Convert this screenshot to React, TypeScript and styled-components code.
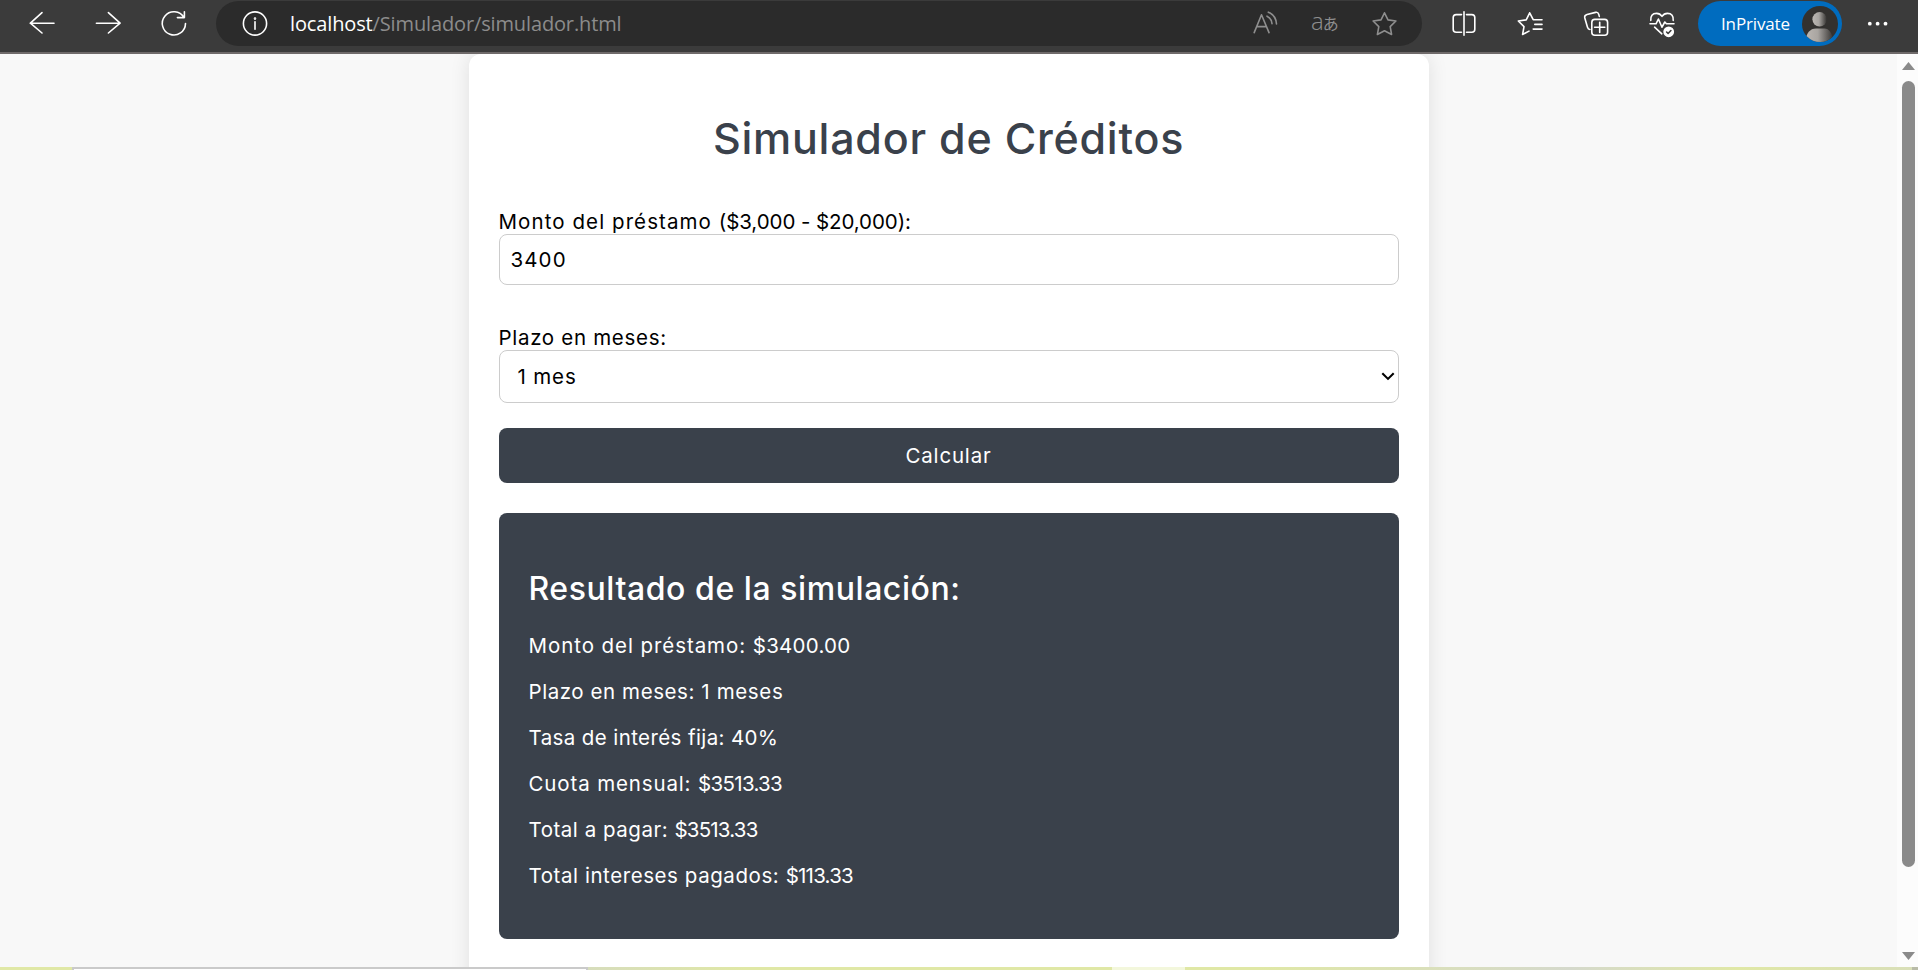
import React, { useState } from 'react'
import styled, { createGlobalStyle } from 'styled-components'

const resultados = [
  { label: 'Monto del préstamo: ', labelSpacing: 0.93, value: '$3400.00', valueSpacing: 0.26 },
  { label: 'Plazo en meses: ', labelSpacing: 0.57, value: '1 meses', valueSpacing: 0.64 },
  { label: 'Tasa de interés fija: ', labelSpacing: 0.4, value: '40%', valueSpacing: 0.3 },
  { label: 'Cuota mensual: ', labelSpacing: 0.86, value: '$3513.33', valueSpacing: -0.68 },
  { label: 'Total a pagar: ', labelSpacing: 0.53, value: '$3513.33', valueSpacing: -0.8 },
  { label: 'Total intereses pagados: ', labelSpacing: 0.57, value: '$113.33', valueSpacing: -0.77 },
]

const BrowserBar: React.FC = () => (
  <StyledToolbar>
    <StyledNav>
      <StyledIcon viewBox="0 0 27 27">
        <path d="M2.2 13.2H26M14 2.6 2.4 13.2 14 23" />
      </StyledIcon>
      <StyledIcon viewBox="0 0 27 27">
        <path d="M2.400 13.2h23.6M14.400 2.6l11.7 10.6L14.400 23" />
      </StyledIcon>
      <StyledIcon viewBox="0 0 27 27">
        <path d="M25.5 13.5a11.6 11.6 0 1 1-1.6-6M24.4 1.8v5.8h-7" />
      </StyledIcon>
    </StyledNav>
    <StyledAddress>
      <StyledIcon viewBox="0 0 27 27">
        <circle cx="14" cy="13.5" r="11.6" />
        <path d="M14 11.8v7.4" />
        <circle cx="14" cy="8.6" r="0.5" />
      </StyledIcon>
      <StyledUrl>
        <b>localhost</b>/Simulador/simulador.html
      </StyledUrl>
      <StyledAddressTools>
        <StyledIcon viewBox="0 0 27 27" $muted>
          <path d="M2.2 22.6 9.5 4.8 17 22.6M4.8 16.6h9.5M16.3 2.2Q24 5.4 24.5 14M15 6.2q4.6 2.2 5 7.4" />
        </StyledIcon>
        <StyledTranslate>
          a<span>あ</span>
        </StyledTranslate>
        <StyledIcon viewBox="0 0 27 27" $muted>
          <path d="M13.5 2.8 17 9.9l7.9 1.1-5.7 5.6 1.4 7.9-7.1-3.8-7.1 3.8 1.4-7.9L2.1 11 10 9.9z" />
        </StyledIcon>
      </StyledAddressTools>
    </StyledAddress>
    <StyledActions>
      <StyledIcon viewBox="0 0 27 27">
        <path d="M11.5 4.6H6.2q-3 0-3 3v11.6q0 3 3 3h5.3M16.5 4.6h5.3q3 0 3 3v11.6q0 3-3 3h-5.3M14 1.8v23.4" />
      </StyledIcon>
      <StyledIcon viewBox="0 0 27 27">
        <path d="M26 9.7h-8.8L13.7 2.8 10.2 9.9 2.3 11l5.7 5.6-1.4 7.9 6.4-3.4M18.8 14.4H26M17.2 19.1H26" />
      </StyledIcon>
      <StyledIcon viewBox="0 0 27 27">
        <path d="M17.3 6.4l-.6-2.1q-.7-2.4-3.1-1.9L5 4.5Q2.1 5.3 2.8 8l2.7 9.3q.6 2 2.4 2.2" />
        <rect x="9.8" y="9.4" width="15.8" height="15.8" rx="3" />
        <path d="M17.7 12.2v10.2M12.6 17.3h10.2" />
      </StyledIcon>
      <StyledIcon viewBox="0 0 27 27">
        <path d="M2.8 10.4Q2.2 3.4 8.6 3.4q3.4 0 5.4 3 2-3 5.4-3 6.4 0 5.8 7M2 13.8h6L10.4 9 14 17.2l2.8-5.2 1.6 1.8H26M6.6 17.2l7.2 6.6" />
        <circle cx="20.7" cy="21.8" r="4.6" fill="#fff" />
        <path d="M18.6 22l1.5 1.5 2.8-3" stroke="#3b3b3b" />
      </StyledIcon>
    </StyledActions>
    <StyledProfile>
      InPrivate
      <svg width="36" height="36" viewBox="0 0 36 36">
        <defs>
          <linearGradient id="skin">
            <stop offset="0" stopColor="#bdb8b3" />
            <stop offset="0.45" stopColor="#a9a5a1" />
            <stop offset="1" stopColor="#33312f" />
          </linearGradient>
          <clipPath id="round">
            <circle cx="18" cy="18" r="18" />
          </clipPath>
        </defs>
        <g clipPath="url(#round)">
          <rect width="36" height="36" fill="#33312f" />
          <circle cx="17.6" cy="13.3" r="7.2" fill="url(#skin)" />
          <path d="M3 36q2-13.4 11-13.4h8.5q7 0 9 13.4z" fill="url(#skin)" />
        </g>
      </svg>
    </StyledProfile>
    <StyledIcon viewBox="0 0 27 27">
      <g fill="#fff" stroke="none">
        <circle cx="5.8" cy="13.7" r="1.9" />
        <circle cx="13.6" cy="13.7" r="1.9" />
        <circle cx="21.5" cy="13.7" r="1.9" />
      </g>
    </StyledIcon>
  </StyledToolbar>
)

const App: React.FC = () => {
  const [monto, setMonto] = useState('3400')

  return (
    <StyledWindow>
      <GlobalStyle />
      <BrowserBar />
      <StyledViewport>
        <StyledPage>
          <StyledCard>
            <StyledTitle>Simulador de Créditos</StyledTitle>
            <StyledLabel htmlFor="monto">
              <StyledText $spacing={1.08}>Monto del préstamo </StyledText>
              <StyledText $spacing={-0.08}>($3,000 - $20,000):</StyledText>
            </StyledLabel>
            <StyledInput id="monto" value={monto} onChange={e => setMonto(e.target.value)} />
            <StyledLabel>
              <StyledText $spacing={0.69}>Plazo en meses:</StyledText>
            </StyledLabel>
            <StyledSelect>
              1 mes
              <svg width="14" height="9" viewBox="0 0 14 9">
                <path d="M1.3 1.3 7 6.9l5.7-5.6" fill="none" stroke="#000" strokeWidth="2.1" />
              </svg>
            </StyledSelect>
            <StyledButton>Calcular</StyledButton>
            <StyledResult>
              <h2>Resultado de la simulación:</h2>
              {resultados.map(item => (
                <p key={item.label}>
                  <StyledText $spacing={item.labelSpacing}>{item.label}</StyledText>
                  <StyledText $spacing={item.valueSpacing}>{item.value}</StyledText>
                </p>
              ))}
            </StyledResult>
          </StyledCard>
        </StyledPage>
        <StyledScrollbar>
          <svg width="13" height="8" viewBox="0 0 13 8"><path d="M0 8 6.5 0 13 8z" fill="#8a8a8a" /></svg>
          <StyledThumb />
          <svg width="13" height="8" viewBox="0 0 13 8"><path d="M0 0h13L6.5 8z" fill="#8a8a8a" /></svg>
        </StyledScrollbar>
      </StyledViewport>
      <StyledDesktopEdge>
        <i /><i /><i /><i /><i /><i />
      </StyledDesktopEdge>
    </StyledWindow>
  )
}

const GlobalStyle = createGlobalStyle`
  body {
    margin: 0;
    overflow: hidden;
    font-family: Inter, sans-serif;
  }
  * {
    box-sizing: border-box;
  }
`

const StyledWindow = styled.div`
  width: 100%;
  height: 970px;
  display: grid;
  grid-template-rows: 54px 913px 3px;
  overflow: hidden;
`
const StyledToolbar = styled.header`
  display: flex;
  align-items: center;
  padding: 1px 26px 6px 28px;
  background: #3b3b3b;
  border-bottom: 2px solid #6f6a6a;
  font-family: 'Open Sans', sans-serif;
`
const StyledIcon = styled.svg<{ $muted?: boolean }>`
  width: 27px;
  height: 27px;
  flex: none;
  overflow: visible;
  fill: none;
  stroke: ${({ $muted }) => ($muted ? '#8e8e8e' : '#fff')};
  stroke-width: 1.6;
  stroke-linecap: round;
  stroke-linejoin: round;
`
const StyledNav = styled.nav`
  display: flex;
  gap: 39px;
  margin-right: 29px;
`
const StyledAddress = styled.div`
  width: 1206px;
  height: 45px;
  display: flex;
  align-items: center;
  padding: 0 24px 0 25px;
  border-radius: 23px;
  background: #2b2b2b;
`
const StyledUrl = styled.div`
  flex: 1;
  margin-left: 22px;
  font-size: 20px;
  line-height: 45px;
  letter-spacing: -0.135px;
  color: #8c8c8c;
  b {
    font-weight: 400;
    color: #fff;
  }
`
const StyledAddressTools = styled.div`
  display: flex;
  align-items: center;
  gap: 32px;
`
const StyledTranslate = styled.div`
  width: 28px;
  height: 45px;
  font-size: 24px;
  font-weight: 300;
  line-height: 40px;
  color: #8e8e8e;
  white-space: nowrap;
  span {
    margin-left: -1px;
    font-family: 'Noto Sans CJK JP', sans-serif;
    font-size: 16px;
    font-weight: 400;
    line-height: 1;
  }
`
const StyledActions = styled.div`
  display: flex;
  gap: 39px;
  margin-left: 28px;
`
const StyledProfile = styled.div`
  width: 144px;
  height: 45px;
  display: flex;
  align-items: center;
  justify-content: space-between;
  margin: 0 22px 0 23px;
  padding: 0 4px 0 23px;
  border-radius: 23px;
  background: #006cbf;
  color: #fff;
  font-size: 17px;
  letter-spacing: -0.14px;
`
const StyledViewport = styled.div`
  display: grid;
  grid-template-columns: 1fr 21px;
  overflow: hidden;
`
const StyledPage = styled.main`
  display: flex;
  justify-content: center;
  align-items: flex-start;
  overflow: hidden;
  background: #f8f8f8;
`
const StyledCard = styled.form`
  width: 960px;
  height: 960px;
  display: flex;
  flex-direction: column;
  flex: none;
  padding: 57px 30px 0;
  border-radius: 12px;
  background: #fff;
  box-shadow: 0 0 20px rgba(0, 0, 0, 0.1);
  font-size: 20.5px;
`
const StyledTitle = styled.h1`
  margin: 0 0 44px;
  font-size: 43px;
  font-weight: 500;
  line-height: 54px;
  letter-spacing: 0.76px;
  text-align: center;
  color: #3a414b;
`
const StyledText = styled.span<{ $spacing: number }>`
  letter-spacing: ${({ $spacing }) => $spacing}px;
`
const StyledLabel = styled.label`
  line-height: 25px;
`
const StyledInput = styled.input`
  height: 51px;
  margin: 0 0 40px;
  padding: 0 11px;
  border: 1px solid #ccc;
  border-radius: 8px;
  outline: none;
  background: #fff;
  font: inherit;
  letter-spacing: 1.1px;
  color: #000;
`
const StyledSelect = styled.div`
  height: 53px;
  display: flex;
  align-items: center;
  justify-content: space-between;
  margin-bottom: 25px;
  padding: 0 3px 0 18px;
  border: 1px solid #ccc;
  border-radius: 8px;
  letter-spacing: 0.85px;
`
const StyledButton = styled.button`
  height: 55px;
  flex: none;
  margin: 0 0 30px;
  padding: 0;
  border: none;
  border-radius: 8px;
  background: #3a414b;
  color: #fff;
  font: inherit;
  letter-spacing: 0.83px;
`
const StyledResult = styled.section`
  height: 426px;
  padding: 56px 30px 0;
  border-radius: 8px;
  background: #3a414b;
  color: #fff;
  h2 {
    margin: 0 0 24px;
    font-size: 32px;
    font-weight: 500;
    line-height: 40px;
    letter-spacing: 0.56px;
  }
  p {
    margin: 0 0 20px;
    line-height: 26px;
  }
`
const StyledScrollbar = styled.div`
  display: flex;
  flex-direction: column;
  align-items: center;
  padding: 8px 3px 7px 5px;
  background: #fcfcfc;
`
const StyledThumb = styled.div`
  width: 13px;
  height: 786px;
  margin: 11px 0 auto;
  border-radius: 7px;
  background: #8a8a8a;
`
// sliver of the desktop and of another window under the browser
const StyledDesktopEdge = styled.div`
  display: grid;
  grid-template-columns: 72px 516px 524px 73px 727px 1fr;
  background: #e0e8a6;
  i:nth-child(2) {
    border: 2px solid #cacaca;
    border-bottom: none;
    background: #fff;
  }
  i:nth-child(3) {
    background: linear-gradient(90deg, #d7ddbc, #e0e8a6 30%);
  }
  i:nth-child(4) {
    background: #f3f7dc;
  }
  i:nth-child(5) {
    background: linear-gradient(90deg, #e0e8a6 10%, #d5d9cc 53%, #e0e8a6 76%, #d9dfb8);
  }
  i:nth-child(6) {
    background: #b9bba8;
  }
`

export default App
